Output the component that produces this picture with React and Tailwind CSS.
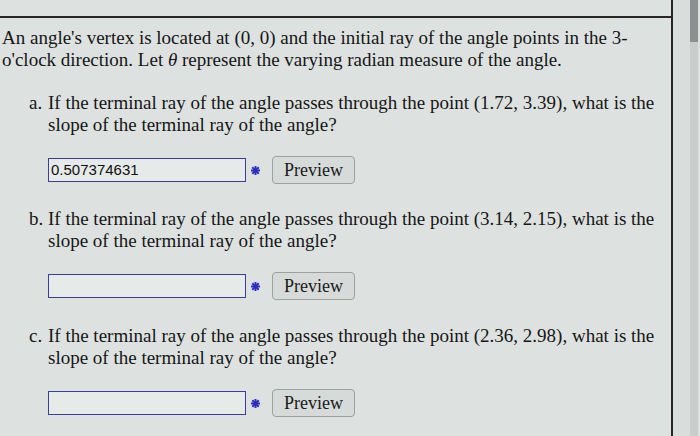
import React from 'react';

const serif = { fontFamily: '"Liberation Serif", "Times New Roman", serif' };

function Star() {
  return (
    <svg width="9" height="9" viewBox="0 0 10 10" className="shrink-0">
      <g stroke="#2b2ec0" strokeWidth="2.2" strokeLinecap="square">
        <line x1="5" y1="1" x2="5" y2="9" />
        <line x1="1" y1="5" x2="9" y2="5" />
        <line x1="2.2" y1="2.2" x2="7.8" y2="7.8" />
        <line x1="7.8" y1="2.2" x2="2.2" y2="7.8" />
      </g>
    </svg>
  );
}

function AnswerRow({ value, mt }) {
  return (
    <div className={`flex items-center ${mt}`}>
      <div className="w-[198px] h-[24px] border-[1.5px] border-[#3c3c9c] bg-[#e6eae8] flex items-center px-[2px] text-[15px] text-[#111]" style={{ fontFamily: '"Liberation Sans", Arial, sans-serif' }}>
        {value}
      </div>
      <div className="ml-[5px]">
        <Star />
      </div>
      <button className="ml-[12px] w-[83px] h-[28px] rounded-[4px] border border-[#9ca09f] bg-[#d6dad9] text-[18px] text-[#1a1a1a] leading-none" style={serif}>
        Preview
      </button>
    </div>
  );
}

function Part({ label, point, value, mt }) {
  return (
    <div className={mt}>
      <div className="flex pl-[27px]">
        <span className="w-[19px] shrink-0">{label}</span>
        <div>
          <div>If the terminal ray of the angle passes through the point {point}, what is the</div>
          <div>slope of the terminal ray of the angle?</div>
          <AnswerRow value={value} mt="mt-[20px]" />
        </div>
      </div>
    </div>
  );
}

export default function App() {
  return (
    <div className="w-[700px] h-[436px] bg-[#dde2e0] flex overflow-hidden text-[#161616]" style={serif}>
      <div className="w-[673px] h-full border-r-2 border-[#2a2224] flex flex-col">
        <div className="h-[16px] shrink-0" />
        <div className="border-t-2 border-[#262626] pt-[9px] pl-[2px] text-[19px] leading-[22px]">
          <div>An angle's vertex is located at (0, 0) and the initial ray of the angle points in the 3-</div>
          <div>o'clock direction. Let <i>θ</i> represent the varying radian measure of the angle.</div>

          <Part label="a." point="(1.72, 3.39)" value="0.507374631" mt="mt-[21px]" />
          <Part label="b." point="(3.14, 2.15)" value="" mt="mt-[24px]" />
          <Part label="c." point="(2.36, 2.98)" value="" mt="mt-[25px]" />
        </div>
      </div>
      <div className="w-[17px] h-full bg-[#d9dddc]" />
      <div className="w-[8px] h-full bg-[#c9cdcc] flex flex-col">
        <div className="h-[42px] bg-[#8c9090]" />
      </div>
    </div>
  );
}
